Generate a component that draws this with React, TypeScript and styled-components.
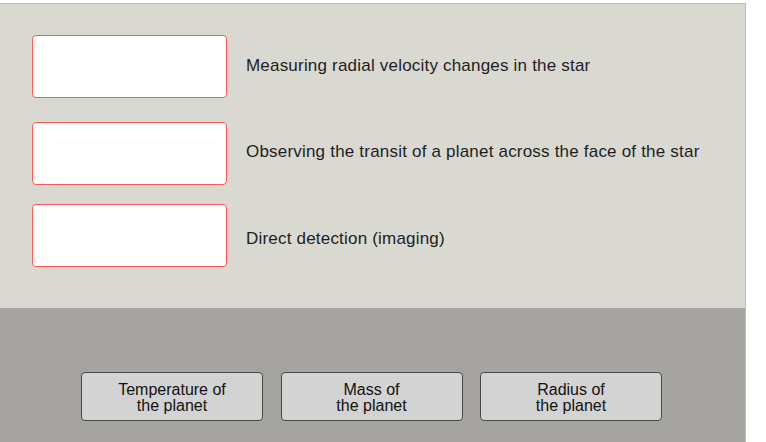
import React from "react";
import styled, { createGlobalStyle } from "styled-components";

const Global = createGlobalStyle`
  html, body { margin: 0; padding: 0; background: #ffffff; }
  body { font-family: Arial, "Liberation Sans", sans-serif; }
`;

const Page = styled.div`
  padding-top: 3px;
  width: 746px;
`;

const Frame = styled.div`
  border-top: 1px solid #bdbdbd;
  border-right: 1px solid #bdbdbd;
  display: flex;
  flex-direction: column;
`;

const TopPanel = styled.div`
  background: #d9d9d2;
  padding: 31px 0 41px 32px;
  display: flex;
  flex-direction: column;
`;

const Row = styled.div<{ $gap: number }>`
  display: flex;
  align-items: center;
  margin-top: ${(p) => p.$gap}px;
`;

const DropBox = styled.div`
  box-sizing: border-box;
  width: 195px;
  height: 63px;
  background: #ffffff;
  border: 1px solid #ff5a5a;
  border-radius: 4px;
  flex-shrink: 0;
`;

const Label = styled.div<{ $shift: number }>`
  margin-left: 19px;
  font-size: 17px;
  letter-spacing: 0.2px;
  color: #1e1e1e;
  white-space: nowrap;
  position: relative;
  top: ${(p) => p.$shift}px;
`;

const BottomPanel = styled.div`
  background: #a5a4a0;
  height: 134px;
  box-sizing: border-box;
  padding: 64px 0 0 81px;
  display: flex;
  gap: 17.5px;
  align-items: flex-start;
`;

const Choice = styled.button`
  box-sizing: border-box;
  width: 182px;
  height: 49px;
  background: #d3d3d3;
  border: 1px solid #4a4a4a;
  border-radius: 4px;
  font-family: Arial, "Liberation Sans", sans-serif;
  font-size: 16px;
  line-height: 16px;
  color: #111111;
  text-align: center;
  padding: 2px 0 0 0;
  display: flex;
  flex-direction: column;
  align-items: center;
  justify-content: center;
`;

const rows = [
  { text: "Measuring radial velocity changes in the star", gap: 0, shift: -1 },
  { text: "Observing the transit of a planet across the face of the star", gap: 24, shift: -1.5 },
  { text: "Direct detection (imaging)", gap: 19, shift: 3.5 },
];

const choices = [
  ["Temperature of", "the planet"],
  ["Mass of", "the planet"],
  ["Radius of", "the planet"],
];

export default function App() {
  return (
    <>
      <Global />
      <Page>
        <Frame>
          <TopPanel>
            {rows.map((r) => (
              <Row key={r.text} $gap={r.gap}>
                <DropBox />
                <Label $shift={r.shift}>{r.text}</Label>
              </Row>
            ))}
          </TopPanel>
          <BottomPanel>
            {choices.map((c) => (
              <Choice key={c[0]}>
                <span>{c[0]}</span>
                <span>{c[1]}</span>
              </Choice>
            ))}
          </BottomPanel>
        </Frame>
      </Page>
    </>
  );
}
